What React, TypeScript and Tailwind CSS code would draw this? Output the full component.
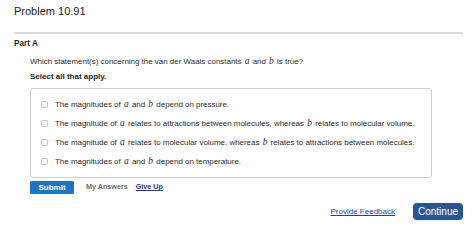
import React from "react";

const M = ({ c }: { c: string }) => (
  <span className="font-['Liberation_Serif',serif] italic text-[9.5px] px-[1px]">{c}</span>
);

const options: React.ReactNode[] = [
  <>The magnitudes of <M c="a" /> and <M c="b" /> depend on pressure.</>,
  <>The magnitude of <M c="a" /> relates to attractions between molecules, whereas <M c="b" /> relates to molecular volume.</>,
  <>The magnitude of <M c="a" /> relates to molecular volume, whereas <M c="b" /> relates to attractions between molecules.</>,
  <>The magnitudes of <M c="a" /> and <M c="b" /> depend on temperature.</>,
];

export default function App() {
  return (
    <div className="w-[474px] h-[227px] bg-white pl-[14px] pr-[11px] font-['Liberation_Sans',Arial,sans-serif] text-[#2a2a2a] overflow-hidden">
      <div className="h-[22px] flex items-center text-[11px] text-[#222]">Problem 10.91</div>
      <div className="mt-[10px] h-[2px] bg-[#dcdcdc]" />
      <div className="mt-[4px] h-[12px] flex items-center text-[8.2px] font-bold text-[#222]">Part A</div>
      <div className="pl-[16px]">
        <div className="mt-[5px] h-[12px] flex items-center text-[7.95px] whitespace-nowrap">
          <span>Which statement(s) concerning the van der Waals constants <M c="a" /> and <M c="b" /> is true?</span>
        </div>
        <div className="mt-[4px] h-[12px] flex items-center text-[8px] font-bold text-[#222]">Select all that apply.</div>
        <div className="mt-[5px] w-[402px] border border-[#cfcfcf] rounded-[3px] pt-[6px] pb-[6px] pl-[10px]">
          {options.map((o, i) => (
            <div key={i} className="h-[19px] flex items-center">
              <div className="w-[7px] h-[7px] border border-[#c4c4c4] rounded-[1.5px] bg-[#fafafa] shrink-0" />
              <div className="ml-[7px] text-[7.95px] whitespace-nowrap">{o}</div>
            </div>
          ))}
        </div>
        <div className="mt-[3px] flex items-center h-[13px]">
          <div className="w-[44px] h-[13px] bg-[#1f75c4] rounded-[1.5px] flex items-center justify-center text-white font-bold text-[8px]">Submit</div>
          <span className="ml-[12px] text-[7.2px] font-bold text-[#6a6a6a]">My Answers</span>
          <span className="ml-[8px] text-[7.2px] font-bold text-[#2b3a8c] underline">Give Up</span>
        </div>
      </div>
      <div className="mt-[9px] flex items-center justify-end h-[17px]">
        <span className="text-[8px] text-[#2b3f8a] underline">Provide Feedback</span>
        <div className="ml-[18px] w-[50px] h-[17px] bg-[#2a5595] rounded-[4px] flex items-center justify-center text-white text-[10px]">Continue</div>
      </div>
    </div>
  );
}
